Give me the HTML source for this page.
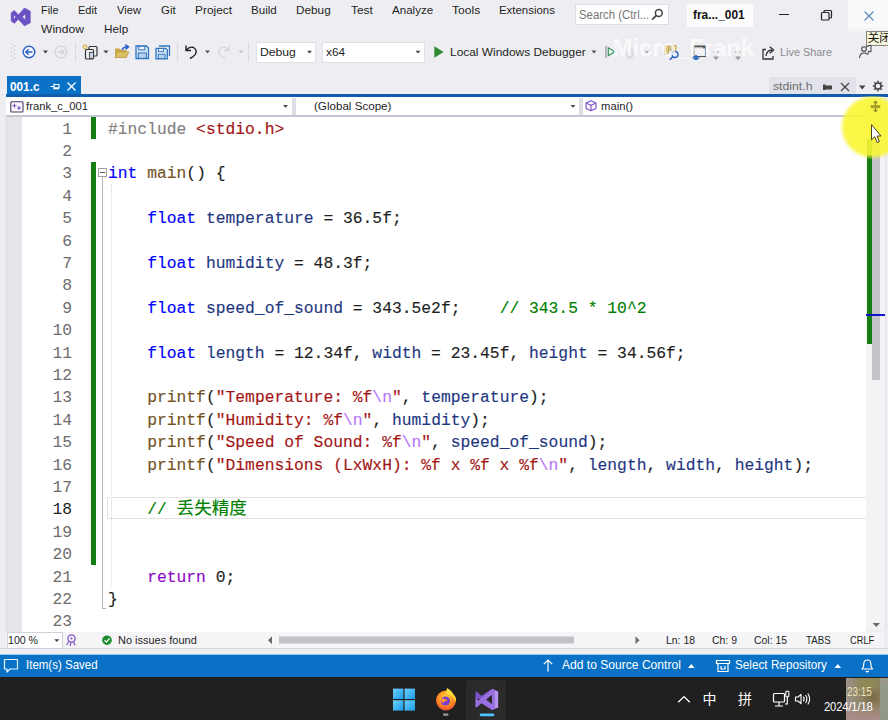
<!DOCTYPE html>
<html lang="en">
<head>
<meta charset="utf-8">
<title>001.c - Visual Studio</title>
<style>
*{box-sizing:border-box;margin:0;padding:0}
html,body{width:888px;height:720px;overflow:hidden;background:#eeeef2}
body{position:relative;font-family:"Liberation Sans","Noto Sans CJK SC",sans-serif;font-size:12.5px;color:#1e1e1e}
.abs{position:absolute}
.t{position:absolute;white-space:nowrap;line-height:1}
/* ---------- title / menu ---------- */
#top{left:0;top:0;width:888px;height:76px;background:#eeeef2}
.menu{font-size:11.6px;margin-top:.4px;color:#1e1e1e}
/* ---------- editor ---------- */
#editor{left:6px;top:116.5px;width:860px;height:515px;background:#fff}
#gutter{left:6px;top:116.5px;width:16px;height:515px;background:#e5e6ea;border-left:1px solid #d9dbe2}
.ln{position:absolute;right:816px;width:60px;text-align:right;font-family:"Liberation Mono",monospace;font-size:16.32px;line-height:22px;color:#6d6d6d;margin-top:1.5px;white-space:pre}
.cl{position:absolute;left:108px;font-family:"Liberation Mono","Noto Sans CJK SC",monospace;font-size:16.32px;line-height:22px;color:#1e1e1e;margin-top:1.5px;white-space:pre;letter-spacing:0;-webkit-text-stroke:.14px}
.k{color:#0000ff}.v{color:#1f377f}.s{color:#a31515}.e{color:#b776fb}.c{color:#008000}.f{color:#74531f}.p{color:#808080}.cur{color:#1e1e1e}.kc{color:#8f08c4}
</style>
</head>
<body>
<div id="top" class="abs"></div>
<!-- VS logo -->
<svg class="abs" style="left:0;top:0" width="40" height="36" viewBox="0 0 40 36">
<path d="M11.2 12.9 L14.3 10.6 L18.4 14.9 L24.4 8.1 L30.2 11.2 V22.8 L24.4 25.8 L18.4 19.3 L14.3 23.2 L11.2 21 Z M13.6 14.6 V19.4 L16 17 Z M25.6 13.6 L22.3 16.9 L25.6 20.2 Z" fill="#6b50c4" fill-rule="evenodd" stroke="#6b50c4" stroke-width=".8" stroke-linejoin="round"/>
</svg>
<!-- menu -->
<div class="t menu" style="left:40.9px;top:4px;transform:scaleX(0.936);transform-origin:0 0">File</div>
<div class="t menu" style="left:78.0px;top:4px;transform:scaleX(0.951);transform-origin:0 0">Edit</div>
<div class="t menu" style="left:116.9px;top:4px;transform:scaleX(0.963);transform-origin:0 0">View</div>
<div class="t menu" style="left:160.8px;top:4px;transform:scaleX(0.985);transform-origin:0 0">Git</div>
<div class="t menu" style="left:194.7px;top:4px;transform:scaleX(1.025);transform-origin:0 0">Project</div>
<div class="t menu" style="left:251.0px;top:4px;transform:scaleX(0.997);transform-origin:0 0">Build</div>
<div class="t menu" style="left:296.1px;top:4px;transform:scaleX(1.015);transform-origin:0 0">Debug</div>
<div class="t menu" style="left:350.6px;top:4px;transform:scaleX(1.025);transform-origin:0 0">Test</div>
<div class="t menu" style="left:391.8px;top:4px;transform:scaleX(0.999);transform-origin:0 0">Analyze</div>
<div class="t menu" style="left:451.9px;top:4px;transform:scaleX(1.041);transform-origin:0 0">Tools</div>
<div class="t menu" style="left:499.2px;top:4px;transform:scaleX(0.986);transform-origin:0 0">Extensions</div>
<div class="t menu" style="left:40.9px;top:22.8px;transform:scaleX(1.040);transform-origin:0 0">Window</div>
<div class="t menu" style="left:103.7px;top:22.8px;transform:scaleX(1.014);transform-origin:0 0">Help</div>
<!-- search box -->
<div class="abs" style="left:575px;top:4px;width:94px;height:21px;background:#fff;border:1px solid #dddde6"></div>
<div class="t" style="left:579.0px;top:9px;font-size:12.3px;color:#767676;transform:scaleX(0.925);transform-origin:0 0">Search (Ctrl...</div>
<svg class="abs" style="left:651px;top:8px" width="13" height="13" viewBox="0 0 13 13"><circle cx="7.8" cy="5" r="3.4" fill="none" stroke="#444" stroke-width="1.5"/><path d="M5.4 7.4 L1.2 11.6" stroke="#444" stroke-width="1.8"/></svg>
<!-- solution name -->
<div class="abs" style="left:687px;top:4px;width:66px;height:23px;background:#fcfcfd"></div>
<div class="t" style="left:693.1px;top:9px;font-size:12.6px;font-weight:bold;color:#111;transform:scaleX(0.946);transform-origin:0 0">fra..._001</div>
<!-- window buttons -->
<div class="abs" style="left:848px;top:0;width:40px;height:33px;background:linear-gradient(180deg,#fafafc 0,#fafafc 78%,#eeeef2 100%)"></div>
<div class="abs" style="left:779px;top:14px;width:10px;height:1.3px;background:#222"></div>
<svg class="abs" style="left:820px;top:9px" width="13" height="13" viewBox="0 0 13 13"><rect x="1.5" y="3.5" width="7.5" height="7.5" rx="1" fill="none" stroke="#222" stroke-width="1.2"/><path d="M4 3.5 V2.5 Q4 1.5 5 1.5 H10.5 Q11.5 1.5 11.5 2.5 V8 Q11.5 9 10.5 9 H9" fill="none" stroke="#222" stroke-width="1.2"/></svg>
<svg class="abs" style="left:863px;top:10px" width="12" height="12" viewBox="0 0 12 12"><path d="M1.5 1.5 L10.5 10.5 M10.5 1.5 L1.5 10.5" stroke="#5b8cc0" stroke-width="1.15"/></svg>
<!-- tooltip -->
<div class="abs" style="left:865.5px;top:30.5px;width:26px;height:15.5px;background:#f6f6dc;border:1px solid #85857a"></div>
<div class="t" style="left:867.5px;top:32.5px;font-size:11.8px;color:#111;font-family:'Liberation Sans','Noto Sans CJK SC',sans-serif">关闭</div>
<!-- ===== toolbar ===== -->
<svg class="abs" style="left:0;top:40px" width="888" height="28" viewBox="0 40 888 28">
<g fill="#c6c6d0"><circle cx="11.5" cy="44" r=".8"/><circle cx="14.5" cy="46" r=".8"/><circle cx="11.5" cy="48" r=".8"/><circle cx="14.5" cy="50" r=".8"/><circle cx="11.5" cy="52" r=".8"/><circle cx="14.5" cy="54" r=".8"/><circle cx="11.5" cy="56" r=".8"/><circle cx="14.5" cy="58" r=".8"/><circle cx="11.5" cy="60" r=".8"/></g>
<!-- back -->
<circle cx="29" cy="52" r="5.8" fill="#f4f7fd" stroke="#2b62c8" stroke-width="1.4"/>
<path d="M32.5 52 H26 M28.6 49.2 L25.8 52 L28.6 54.8" fill="none" stroke="#2b62c8" stroke-width="1.4"/>
<path d="M43 50.6 H48 L45.5 53.4 Z" fill="#444"/>
<!-- forward (disabled) -->
<circle cx="60.8" cy="52" r="5.8" fill="none" stroke="#d2d2da" stroke-width="1.3"/>
<path d="M57.5 52 H64 M61.4 49.4 L64 52 L61.4 54.6" fill="none" stroke="#d2d2da" stroke-width="1.3"/>
<rect x="75" y="42" width="1" height="20" fill="#dadae2"/>
<!-- new item -->
<rect x="89" y="46.5" width="8" height="9.5" rx="1" fill="#eeeef2" stroke="#333" stroke-width="1.2"/>
<rect x="85.5" y="49.5" width="8" height="9.5" rx="1" fill="#eeeef2" stroke="#333" stroke-width="1.2"/>
<rect x="89.5" y="52.5" width="4" height="6" fill="#c8d4ea" stroke="#333" stroke-width=".8"/>
<circle cx="85" cy="46.8" r="2" fill="#f3e6a8" stroke="#b89b30" stroke-width=".8"/>
<path d="M103.5 50.6 H108.5 L106 53.4 Z" fill="#444"/>
<!-- open folder -->
<path d="M115 48.5 H119.5 L121 50 H126.5 V57.5 H115 Z" fill="#c8a84a"/>
<path d="M115 57.5 L117.5 51.8 H129 L126.5 57.5 Z" fill="#dcbf62" stroke="#b3923a" stroke-width=".6"/>
<path d="M122 50 Q123.5 46.8 127 46.8 M125.2 44.6 L128.6 46.8 L125.6 49.4" fill="none" stroke="#2b62c8" stroke-width="1.4"/>
<!-- save -->
<path d="M136 46 H146.5 L148.5 48 V58.5 H136 Z" fill="#d5e4f5" stroke="#2f74c0" stroke-width="1.3"/>
<rect x="138.8" y="46.3" width="6" height="3.6" fill="#eef4fb" stroke="#2f74c0" stroke-width="1"/>
<rect x="138.3" y="53" width="8" height="5.3" fill="#b9d0ec" stroke="#2f74c0" stroke-width="1"/>
<!-- save all -->
<path d="M159 46 H169.5 V56" fill="none" stroke="#2f74c0" stroke-width="1.3"/>
<path d="M156 48.3 H165.5 L167.3 50 V58.8 H156 Z" fill="#d5e4f5" stroke="#2f74c0" stroke-width="1.3"/>
<rect x="158.5" y="48.6" width="5" height="3" fill="#eef4fb" stroke="#2f74c0" stroke-width=".9"/>
<rect x="158.2" y="54.2" width="6.8" height="4.4" fill="#b9d0ec" stroke="#2f74c0" stroke-width=".9"/>
<rect x="177" y="42" width="1" height="20" fill="#dadae2"/>
<!-- undo -->
<path d="M186 45.5 V50.5 H191 M186.3 50.2 Q189.5 46 193.5 47.5 Q197.5 49.8 195.5 54 Q194 56.5 190 58.5" fill="none" stroke="#222" stroke-width="1.4"/>
<path d="M205 50.6 H210 L207.5 53.4 Z" fill="#555"/>
<!-- redo (disabled) -->
<path d="M229 45.5 V50.5 H224 M228.7 50.2 Q225.5 46 221.5 47.5 Q217.5 49.8 219.5 54 Q221 56.5 225 58.5" fill="none" stroke="#d6d6de" stroke-width="1.4"/>
<path d="M238.5 50.6 H243.5 L241 53.4 Z" fill="#c4c4cc"/>
<rect x="248" y="42" width="1" height="20" fill="#dadae2"/>
<!-- combos -->
<rect x="256.5" y="42.5" width="59" height="20" fill="#fff" stroke="#dfe0e8"/>
<path d="M307 50.8 H312 L309.5 53.6 Z" fill="#444"/>
<rect x="322.5" y="42.5" width="102" height="20" fill="#fff" stroke="#dfe0e8"/>
<path d="M415.5 50.8 H420.5 L418 53.6 Z" fill="#444"/>
<!-- start -->
<path d="M434.3 46.3 L443.6 52 L434.3 57.7 Z" fill="#2f8a2f"/>
<path d="M591.5 50.6 H596.5 L594 53.4 Z" fill="#555"/>
<path d="M608.3 47.8 L614.8 51.8 L608.3 55.8 Z" fill="#eef8f0" stroke="#3f9560" stroke-width="1.2"/>
<rect x="605.4" y="46" width="1.1" height="12" fill="#8a8a8a"/>
<path d="M630 46 Q636 50 634 55.5 Q632.5 59 629.5 59 Q625.5 58.5 625.5 54.5 Q626 52 628 50.5 Q628 53 629.8 53 Q631.5 50 630 46 Z" fill="#dcdce2"/>
<path d="M644.6 51 H649.4 L647 53.6 Z" fill="#a8a8ae"/>
</svg>
<div class="t" style="left:259.7px;top:46.5px;font-size:11.8px;transform:scaleX(1.030);transform-origin:0 0">Debug</div>
<div class="t" style="left:325.9px;top:46.5px;font-size:11.8px;transform:scaleX(0.998);transform-origin:0 0">x64</div>
<div class="t" style="left:450.1px;top:46.5px;font-size:11.8px;transform:scaleX(1.010);transform-origin:0 0">Local Windows Debugger</div>
<!-- ===== toolbar right ===== -->
<svg class="abs" style="left:600px;top:36px" width="288" height="32" viewBox="600 36 288 32">
<!-- find in files -->
<rect x="664.5" y="45.5" width="4" height="9" fill="#d9c27a" stroke="#b39a45" stroke-width=".8"/>
<rect x="670" y="45.5" width="6" height="5" fill="#d9c27a" stroke="#b39a45" stroke-width=".8"/>
<circle cx="675" cy="54.5" r="3" fill="#eef3fb" stroke="#2b62c8" stroke-width="1.3"/>
<path d="M672.8 56.8 L669.8 59.8" stroke="#2b62c8" stroke-width="1.6"/>
<!-- window icon -->
<rect x="694" y="46" width="11.5" height="10.5" fill="#f4f4f8" stroke="#555" stroke-width="1.1"/>
<rect x="694" y="46" width="11.5" height="2.4" fill="#555"/>
<path d="M692 58.5 L696 54.5 L700 58.5 Z" fill="#2f74c0"/>
<rect x="694.2" y="57" width="3.6" height="3" fill="#2f74c0"/>
<path d="M713 52 H719 M716 52 V56 M713.8 57 H718.2 L716 59.6 Z" stroke="#999" stroke-width="1" fill="#999"/>
<path d="M735 52 H741 M738 52 V56 M735.8 57 H740.2 L738 59.6 Z" stroke="#999" stroke-width="1" fill="#999"/>
<!-- live share -->
<path d="M766 49.5 H763 V59 H773 V56" fill="none" stroke="#333" stroke-width="1.3"/>
<path d="M766 56 Q766.5 50.5 772 50 M769.8 46.8 L773.6 50 L769.8 53.2" fill="none" stroke="#333" stroke-width="1.3"/>
<!-- feedback -->
<circle cx="864" cy="49" r="2.3" fill="none" stroke="#444" stroke-width="1.1"/>
<path d="M859.5 58 Q860 53 864 53 Q866 53 867 54" fill="none" stroke="#444" stroke-width="1.1"/>
<path d="M866 47 L871 45 V52 L868.5 51 L867.8 55" fill="none" stroke="#444" stroke-width="1"/>
</svg>
<div class="t" style="left:780.4px;top:46.5px;font-size:11.8px;color:#8a8a90;transform:scaleX(0.922);transform-origin:0 0">Live Share</div>
<!-- watermark -->
<div class="t" style="left:612.5px;top:36px;font-size:24px;font-weight:bold;color:#fff;opacity:.7;letter-spacing:-.1px">Micro_Frank</div>
<!-- ===== tab row ===== -->
<div class="abs" style="left:6.6px;top:76.3px;width:74.6px;height:19.7px;background:#0a72c6"></div>
<div class="t" style="left:10.4px;top:80.5px;font-size:12.6px;font-weight:bold;color:#fff;transform:scaleX(0.936);transform-origin:0 0">001.c</div>
<svg class="abs" style="left:49px;top:80px" width="30" height="13" viewBox="0 0 30 13">
<path d="M1.5 6.5 H5 M5 3.5 V9.5 M5 4.5 H10 V7.8 H5 M5 8.6 H10" fill="none" stroke="#fff" stroke-width="1.1"/>
<path d="M18.5 2.5 L26.5 10.5 M26.5 2.5 L18.5 10.5" stroke="#fff" stroke-width="1.3"/>
</svg>
<div class="abs" style="left:768.5px;top:77px;width:87px;height:18px;background:#e2e3ea"></div>
<div class="t" style="left:772.9px;top:80.5px;font-size:11.8px;color:#6e6e6e;transform:scaleX(1.038);transform-origin:0 0">stdint.h</div>
<svg class="abs" style="left:818px;top:78px" width="70" height="18" viewBox="818 78 70 18">
<path d="M823 84.5 H825.5 V90 H823 Z M825.5 85.5 H832 V89.5 H825.5 Z" fill="#444"/>
<path d="M841 83 L849 91 M849 83 L841 91" stroke="#444" stroke-width="1.3"/>
<path d="M859 85.5 H865.5 L862.2 89.5 Z" fill="#444"/>
<g transform="translate(878 86)"><circle r="3" fill="none" stroke="#444" stroke-width="1.6"/><g stroke="#444" stroke-width="1.6"><path d="M0 -5.2 V-3.6 M0 5.2 V3.6 M-5.2 0 H-3.6 M5.2 0 H3.6 M-3.7 -3.7 L-2.6 -2.6 M3.7 3.7 L2.6 2.6 M-3.7 3.7 L-2.6 2.6 M3.7 -3.7 L2.6 -2.6"/></g></g>
</svg>
<div class="abs" style="left:6px;top:94.3px;width:882px;height:2.3px;background:#0f5eae"></div>
<!-- ===== nav bar ===== -->
<div class="abs" style="left:6px;top:97px;width:860px;height:19px;background:#fff"></div>
<div class="abs" style="left:6px;top:115.2px;width:861px;height:1.8px;background:#c6c7d2"></div>
<div class="abs" style="left:292px;top:98px;width:4px;height:17px;background:#dcdde5"></div>
<div class="abs" style="left:579px;top:98px;width:4px;height:17px;background:#dcdde5"></div>
<svg class="abs" style="left:10px;top:100.5px" width="14" height="12" viewBox="0 0 14 12"><rect x=".8" y=".8" width="12.2" height="10.2" rx="1" fill="#faf6fd" stroke="#4a3a66" stroke-width="1.1"/><path d="M4.5 2.8 V6.8 M2.5 4.8 H6.5 M9 5 V9 M7 7 H11" stroke="#7d52c4" stroke-width="1.1"/></svg>
<div class="t" style="left:25.8px;top:101.1px;font-size:11.8px;transform:scaleX(0.956);transform-origin:0 0">frank_c_001</div>
<div class="t" style="left:313.8px;top:101.1px;font-size:11.8px;transform:scaleX(0.984);transform-origin:0 0">(Global Scope)</div>
<div class="t" style="left:601.4px;top:101.1px;font-size:11.8px;transform:scaleX(0.957);transform-origin:0 0">main()</div>
<svg class="abs" style="left:280px;top:98px" width="320" height="17" viewBox="280 98 320 17">
<path d="M283 105 H288 L285.5 107.8 Z" fill="#444"/>
<path d="M570.5 105 H575.5 L573 107.8 Z" fill="#444"/>
<path d="M591 100.8 L596 103 V108.5 L591 110.8 L586 108.5 V103 Z M586 103 L591 105.2 L596 103 M591 105.2 V110.8" fill="#f7f2fd" stroke="#7d52c4" stroke-width="1.1" stroke-linejoin="round"/>
</svg>
<div id="editor" class="abs"></div>
<div id="gutter" class="abs"></div>
<!-- change bars -->
<div class="abs" style="left:91px;top:116.8px;width:5px;height:22.2px;background:#147d14"></div>
<div class="abs" style="left:91px;top:161.8px;width:5px;height:403.2px;background:#147d14"></div>
<!-- outlining -->
<div class="abs" style="left:102px;top:177px;width:1px;height:431px;background:#b4b4b4"></div>
<div class="abs" style="left:102px;top:607.5px;width:4px;height:1px;background:#b4b4b4"></div>
<div class="abs" style="left:98px;top:168px;width:9px;height:9px;background:#fff;border:1px solid #a0a0a0"></div>
<div class="abs" style="left:100px;top:172px;width:5px;height:1px;background:#555"></div>
<!-- indent guide -->
<div class="abs" style="left:111px;top:184px;width:0;height:402px;border-left:1px dotted #d8d8d8"></div>
<!-- current line -->
<div class="abs" style="left:106.5px;top:497px;width:760.5px;height:22px;border:1.6px solid #e3e3e7"></div>
<div id="code">
<div class="ln" style="top:117.00px">1</div>
<div class="cl" style="top:117.00px"><span class="p">#include </span><span class="s">&lt;stdio.h&gt;</span></div>
<div class="ln" style="top:139.40px">2</div>
<div class="ln" style="top:161.80px">3</div>
<div class="cl" style="top:161.80px"><span class="k">int</span> <span class="f">main</span>() {</div>
<div class="ln" style="top:184.20px">4</div>
<div class="ln" style="top:206.60px">5</div>
<div class="cl" style="top:206.60px">    <span class="k">float</span> <span class="v">temperature</span> = 36.5f;</div>
<div class="ln" style="top:229.00px">6</div>
<div class="ln" style="top:251.40px">7</div>
<div class="cl" style="top:251.40px">    <span class="k">float</span> <span class="v">humidity</span> = 48.3f;</div>
<div class="ln" style="top:273.80px">8</div>
<div class="ln" style="top:296.20px">9</div>
<div class="cl" style="top:296.20px">    <span class="k">float</span> <span class="v">speed_of_sound</span> = 343.5e2f;    <span class="c">// 343.5 * 10^2</span></div>
<div class="ln" style="top:318.60px">10</div>
<div class="ln" style="top:341.00px">11</div>
<div class="cl" style="top:341.00px">    <span class="k">float</span> <span class="v">length</span> = 12.34f, <span class="v">width</span> = 23.45f, <span class="v">height</span> = 34.56f;</div>
<div class="ln" style="top:363.40px">12</div>
<div class="ln" style="top:385.80px">13</div>
<div class="cl" style="top:385.80px">    <span class="f">printf</span>(<span class="s">&quot;Temperature: %f</span><span class="e">\n</span><span class="s">&quot;</span>, <span class="v">temperature</span>);</div>
<div class="ln" style="top:408.20px">14</div>
<div class="cl" style="top:408.20px">    <span class="f">printf</span>(<span class="s">&quot;Humidity: %f</span><span class="e">\n</span><span class="s">&quot;</span>, <span class="v">humidity</span>);</div>
<div class="ln" style="top:430.60px">15</div>
<div class="cl" style="top:430.60px">    <span class="f">printf</span>(<span class="s">&quot;Speed of Sound: %f</span><span class="e">\n</span><span class="s">&quot;</span>, <span class="v">speed_of_sound</span>);</div>
<div class="ln" style="top:453.00px">16</div>
<div class="cl" style="top:453.00px">    <span class="f">printf</span>(<span class="s">&quot;Dimensions (LxWxH): %f x %f x %f</span><span class="e">\n</span><span class="s">&quot;</span>, <span class="v">length</span>, <span class="v">width</span>, <span class="v">height</span>);</div>
<div class="ln" style="top:475.40px">17</div>
<div class="ln cur" style="top:497.80px">18</div>
<div class="cl" style="top:497.80px">    <span class="c">// <span style="font-size:17.6px;line-height:1">丢失精度</span></span></div>
<div class="ln" style="top:520.20px">19</div>
<div class="ln" style="top:542.60px">20</div>
<div class="ln" style="top:565.00px">21</div>
<div class="cl" style="top:565.00px">    <span class="kc">return</span> 0;</div>
<div class="ln" style="top:587.40px">22</div>
<div class="cl" style="top:587.40px">}</div>
<div class="ln" style="top:609.80px">23</div>
</div>
<!-- ===== v scrollbar ===== -->
<div class="abs" style="left:866px;top:97px;width:18.5px;height:533px;background:#f3f3f6"></div>
<div class="abs" style="left:884.5px;top:97px;width:1px;height:533px;background:#e2e2e8"></div>
<div class="abs" style="left:867.3px;top:139px;width:5px;height:204.5px;background:#147d14"></div>
<div class="abs" style="left:872.3px;top:133px;width:8.2px;height:247px;background:#c2c3c9"></div>
<div class="abs" style="left:866px;top:313.8px;width:18.5px;height:2px;background:#1212c8"></div>
<!-- cursor highlight -->
<div class="abs" style="left:838.5px;top:93.5px;width:67px;height:66px;border-radius:50%;background:radial-gradient(circle closest-side,rgba(250,246,52,.93) 0,rgba(250,246,52,.9) 84%,rgba(250,246,52,0) 100%);clip-path:inset(2.5px 0 0 0)"></div>
<svg class="abs" style="left:866px;top:97px" width="22" height="533" viewBox="866 97 22 533">
<rect x="870.8" y="105" width="9.4" height="3.2" fill="#a9a32c"/><path d="M875.5 105 V101.5 M873.7 103.2 L875.5 101.3 L877.3 103.2 M875.5 108 V111.5 M873.7 109.8 L875.5 111.7 L877.3 109.8" fill="none" stroke="#8c8624" stroke-width="1.2"/>
<path d="M872.6 623 H880 L876.3 627 Z" fill="#6a6a6a"/>
</svg>
<svg class="abs" style="left:868px;top:123px" width="16" height="22" viewBox="0 0 16 22"><path d="M3.5 1.6 V16.8 L6.8 13.8 L9.2 19.6 L11.4 18.6 L9 13 H13 Z" fill="#fff" stroke="#4a4418" stroke-width="1" stroke-linejoin="round"/></svg>
<!-- ===== bottom bar ===== -->
<div class="abs" style="left:0;top:631.5px;width:888px;height:24px;background:#eeeef2"></div>
<div class="abs" style="left:6px;top:631.5px;width:878px;height:16.5px;background:#f5f5f7"></div>
<div class="abs" style="left:0;top:648px;width:888px;height:1px;background:#d6d6da"></div>
<div class="abs" style="left:7px;top:631.5px;width:56px;height:17px;background:#fff;border:1px solid #d0d1da"></div>
<div class="t" style="left:8.4px;top:635px;font-size:11.8px;transform:scaleX(0.897);transform-origin:0 0">100 %</div>
<svg class="abs" style="left:50px;top:630px" width="600" height="20" viewBox="50 630 600 20">
<path d="M54.3 639.2 H59.3 L56.8 642 Z" fill="#444"/>
<!-- intellicode-ish icon -->
<circle cx="71.5" cy="638.5" r="3.6" fill="none" stroke="#7d52c4" stroke-width="1.3"/>
<path d="M68.8 641.5 L66.5 645 M71 642.5 L70 646 M73.5 641.8 L75 645.2" stroke="#7d52c4" stroke-width="1.2" fill="none"/>
<circle cx="71.5" cy="638.5" r="1.1" fill="#7d52c4"/>
<!-- ok -->
<circle cx="107" cy="640.2" r="4.8" fill="#1f8a2e"/>
<path d="M104.6 640.3 L106.4 642.1 L109.6 638.4" fill="none" stroke="#fff" stroke-width="1.3"/>
<!-- h scroll -->

<path d="M272 636.2 V644.2 L268 640.2 Z" fill="#6a6a6a"/>
<rect x="279" y="636.5" width="295" height="7" fill="#c2c3c9"/>
<path d="M635.5 636.2 V644.2 L639.5 640.2 Z" fill="#6a6a6a"/>
</svg>
<div class="t" style="left:117.6px;top:635px;font-size:11.8px;transform:scaleX(0.931);transform-origin:0 0">No issues found</div>
<div class="t" style="left:665.7px;top:635px;font-size:11.8px;transform:scaleX(0.884);transform-origin:0 0">Ln: 18</div>
<div class="t" style="left:712.1px;top:635px;font-size:11.8px;transform:scaleX(0.886);transform-origin:0 0">Ch: 9</div>
<div class="t" style="left:754.4px;top:635px;font-size:11.8px;transform:scaleX(0.883);transform-origin:0 0">Col: 15</div>
<div class="t" style="left:806.4px;top:635px;font-size:11.8px;transform:scaleX(0.822);transform-origin:0 0">TABS</div>
<div class="t" style="left:850.0px;top:635px;font-size:11.8px;transform:scaleX(0.785);transform-origin:0 0">CRLF</div>
<!-- ===== status bar ===== -->
<div class="abs" style="left:0;top:653.5px;width:888px;height:1px;background:#9cc8ea"></div>
<div class="abs" style="left:0;top:654.5px;width:888px;height:23px;background:#0a72c6"></div>
<svg class="abs" style="left:0;top:654px" width="888" height="24" viewBox="0 654 888 24">
<path d="M4.5 659.5 H17.5 V669 H10 L7 672 V669 H4.5 Z" fill="none" stroke="#e8f2fb" stroke-width="1.2" stroke-linejoin="round"/>
<path d="M548 671.5 V660 M543.8 664.2 L548 660 L552.2 664.2" fill="none" stroke="#fff" stroke-width="1.2"/>
<path d="M688 668 H694.6 L691.3 664 Z" fill="#fff"/>
<path d="M716.5 660.5 H729.5 V663.5 H716.5 Z M718 663.5 V671.5 H728 V663.5 M721 666 V669 H725 V666" fill="none" stroke="#fff" stroke-width="1.2"/>
<path d="M834.5 668 H841.1 L837.8 664 Z" fill="#fff"/>
<path d="M862 669 Q863.8 667.5 863.8 664 Q863.8 660 867.3 660 Q870.8 660 870.8 664 Q870.8 667.5 872.6 669 Z M865.8 671 Q867.3 672.6 868.8 671" fill="none" stroke="#fff" stroke-width="1.2" stroke-linejoin="round"/>
</svg>
<div class="t" style="left:25.8px;top:659.3px;font-size:12.6px;color:#fff;transform:scaleX(0.913);transform-origin:0 0">Item(s) Saved</div>
<div class="t" style="left:561.7px;top:659.3px;font-size:12.6px;color:#fff;transform:scaleX(0.959);transform-origin:0 0">Add to Source Control</div>
<div class="t" style="left:735.0px;top:659.3px;font-size:12.6px;color:#fff;transform:scaleX(0.932);transform-origin:0 0">Select Repository</div>
<!-- ===== taskbar ===== -->
<div class="abs" style="left:0;top:677.2px;width:888px;height:42.8px;background:#202020"></div>
<div class="abs" style="left:466px;top:680px;width:40px;height:40px;border-radius:4px 4px 0 0;background:#2a2a2a"></div>
<svg class="abs" style="left:380px;top:678px" width="140" height="42" viewBox="380 678 140 42">
<defs><linearGradient id="wg" x1="0" y1="0" x2="1" y2="1"><stop offset="0" stop-color="#6fd0ff"/><stop offset="1" stop-color="#189ae6"/></linearGradient>
<radialGradient id="fg" cx=".5" cy=".35" r=".75"><stop offset="0" stop-color="#ffd93b"/><stop offset=".55" stop-color="#ff8a1f"/><stop offset="1" stop-color="#e8323c"/></radialGradient></defs>
<rect x="393" y="688.6" width="10.4" height="10.4" fill="url(#wg)"/><rect x="404.6" y="688.6" width="10.4" height="10.4" fill="url(#wg)"/>
<rect x="393" y="700.2" width="10.4" height="10.4" fill="url(#wg)"/><rect x="404.6" y="700.2" width="10.4" height="10.4" fill="url(#wg)"/>
<!-- firefox -->
<circle cx="446" cy="700.5" r="10" fill="url(#fg)"/>
<path d="M447 688 Q452 690.5 453.5 695 Q456.5 697 456 702 Q452 694 446 693.5 Q446.5 690.5 447 688 Z" fill="#ffdb3d"/>
<circle cx="445.5" cy="701" r="4.6" fill="#7a3fd0"/>
<path d="M440.5 699 Q444.5 697.5 447.5 700.5 Q444.5 700.5 442.8 703.2 Z" fill="#ff9a2a"/>
<rect x="443" y="713.6" width="5.5" height="2.2" rx="1" fill="#9a9a9a"/>
<!-- vs -->
<path d="M492 689 L498.2 691.6 V707.4 L492 710 Z" fill="#b794f0"/>
<path d="M492 689 L494.5 690 V709 L492 710 L478.5 698.5 L476.6 700 L475.4 699.4 V692.3 L476.6 691.6 L481.4 695.8 Z" fill="#7c52c8"/>
<path d="M492 710 L494.5 709 V690 L492 689 L478.5 700.5 L476.6 699 L475.4 699.6 V706.7 L476.6 707.4 L481.4 703.2 Z" fill="#9a6fe0"/>
<path d="M492 694.8 L486.2 699.5 L492 704.2 Z" fill="#2a2a2a"/>
<rect x="479.7" y="713.6" width="14.6" height="2.6" rx="1.3" fill="#4cc2ff"/>
</svg>
<!-- systray -->
<svg class="abs" style="left:670px;top:678px" width="150" height="42" viewBox="670 678 150 42">
<path d="M678.2 702.2 L684 696.6 L689.8 702.2" fill="none" stroke="#fff" stroke-width="1.3"/>
<rect x="773.5" y="693.5" width="11" height="8.5" rx="1" fill="none" stroke="#fff" stroke-width="1.2"/>
<path d="M779 702 V705.5 M775 706 H783 M785 704 H787.3 V697" fill="none" stroke="#fff" stroke-width="1.2"/>
<rect x="785.8" y="691.2" width="3" height="5.6" rx=".8" fill="#1f1f1f" stroke="#fff" stroke-width="1.1"/>
<path d="M795.5 697 H798 L801 694.3 V703.7 L798 701 H795.5 Z" fill="none" stroke="#fff" stroke-width="1.1" stroke-linejoin="round"/>
<path d="M803.3 696.6 Q805 699 803.3 701.4 M805.5 695 Q808.3 699 805.5 703 M807.8 693.5 Q811.6 699 807.8 704.5" fill="none" stroke="#fff" stroke-width="1.1"/>
</svg>
<div class="t" style="left:702.5px;top:691.5px;font-size:14px;color:#fff;font-family:'Liberation Sans','Noto Sans CJK SC',sans-serif">中</div>
<div class="t" style="left:738px;top:691.5px;font-size:14px;color:#fff;font-family:'Liberation Sans','Noto Sans CJK SC',sans-serif">拼</div>
<!-- overlay at clock -->
<div class="abs" style="left:846px;top:678px;width:42px;height:42px;background:radial-gradient(ellipse 16px 10px at 22px 5px,#8f8b52 0,rgba(143,139,82,0) 100%),radial-gradient(ellipse 12px 12px at 27px 19px,#7b6b47 0,rgba(123,107,71,0) 100%),linear-gradient(180deg,rgba(0,0,0,0) 55%,#a88c8a 100%),linear-gradient(90deg,#9c948e 0,#8f8568 30%,#8a7f5c 100%)"></div>
<div class="abs" style="left:880px;top:678px;width:8px;height:42px;background:linear-gradient(180deg,#a09a8a 0,#929a8a 30%,#8f9888 100%)"></div>
<div class="t" style="left:847.4px;top:685.6px;font-size:12px;color:#ece4b8;transform:scaleX(0.822);transform-origin:0 0">23:15</div>
<div class="t" style="left:824.2px;top:700.6px;font-size:12px;color:#fff;letter-spacing:-.2px;transform:scaleX(0.942);transform-origin:0 0">2024/1/18</div>
</body>
</html>
